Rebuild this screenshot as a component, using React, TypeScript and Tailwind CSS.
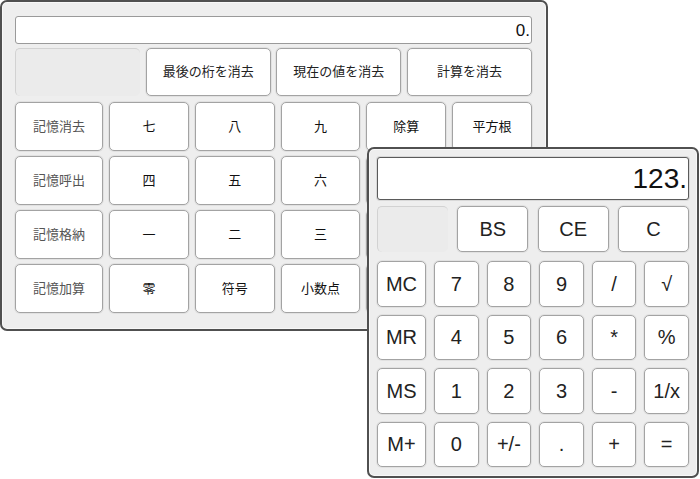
import React from "react";

const font = "font-['Liberation_Sans','Noto_Sans_CJK_JP',sans-serif]";

const jpTop = ["最後の桁を消去", "現在の値を消去", "計算を消去"];
// the last two keys of the lower rows sit under the other window
const jpRows = [
  ["記憶消去", "七", "八", "九", "除算", "平方根"],
  ["記憶呼出", "四", "五", "六", "", ""],
  ["記憶格納", "一", "二", "三", "", ""],
  ["記憶加算", "零", "符号", "小数点", "", ""],
];

const enTop = ["BS", "CE", "C"];
const enRows = [
  ["MC", "7", "8", "9", "/", "√"],
  ["MR", "4", "5", "6", "*", "%"],
  ["MS", "1", "2", "3", "-", "1/x"],
  ["M+", "0", "+/-", ".", "+", "="],
];

const Key = ({ label, className = "" }: { label: string; className?: string }) => (
  <div
    className={`flex items-center justify-center bg-white border border-[#a3a3a3] rounded-[5px] shadow-[0_0_0_1px_rgba(0,0,0,0.05)] ${className}`}
  >
    {label}
  </div>
);

const Blank = () => (
  <div className="bg-[#ebebeb] border-t border-l border-[#d2d2d2] rounded-[5px]" />
);

export default function App() {
  return (
    <div className={`relative w-[700px] h-[479px] bg-white overflow-hidden ${font}`}>
      {/* Japanese calculator window */}
      <div className="absolute left-0 top-0 w-[548px] h-[331px] bg-[#eeeeee] border-2 border-[#505050] rounded-[7px] shadow-[inset_0_0_0_1px_#f8f8f8] pt-[14px] pl-[13px] pr-[14px]">
        <div className="h-[28px] bg-white border border-[#9a9a9a] rounded-[3px] flex items-center justify-end pr-[1px] text-[17px] text-[#111] leading-none">
          0.
        </div>
        <div className="grid grid-cols-4 gap-x-[5.67px] h-[48px] mt-[4px] text-[13px] text-[#222]">
          <Blank />
          {jpTop.map((t) => (
            <Key key={t} label={t} />
          ))}
        </div>
        <div className="grid grid-cols-[88px_repeat(5,1fr)] gap-x-[6px] gap-y-[5.5px] mt-[6px] text-[13px]">
          {jpRows.map((row, r) =>
            row.map((t, c) => (
              <Key
                key={`${r}-${c}`}
                label={t}
                className={`h-[48.5px] ${c === 0 ? "text-[#555]" : "text-[#111]"}`}
              />
            ))
          )}
        </div>
      </div>

      {/* English calculator window */}
      <div className="absolute left-[367px] top-[147px] w-[332px] h-[331px] bg-[#eeeeee] border-2 border-[#505050] rounded-[7px] shadow-[inset_0_0_0_1px_#f8f8f8] pt-[8px] px-[8px]">
        <div className="h-[43px] bg-white border border-[#5a5a5a] rounded-[3px] shadow-[0_0_0_1px_#d8d8d8] flex items-center justify-end pr-[1px] text-[28px] text-[#111] leading-none">
          123.
        </div>
        <div className="grid grid-cols-4 gap-x-[9.33px] h-[46px] mt-[6px] text-[20px] text-[#222]">
          <Blank />
          {enTop.map((t) => (
            <Key key={t} label={t} />
          ))}
        </div>
        <div className="grid grid-cols-[49px_repeat(5,1fr)] gap-x-[8px] gap-y-[8px] mt-[9px] text-[20px] text-[#222]">
          {enRows.map((row, r) =>
            row.map((t, c) => (
              <Key key={`${r}-${c}`} label={t} className="h-[45.5px]" />
            ))
          )}
        </div>
      </div>
    </div>
  );
}
